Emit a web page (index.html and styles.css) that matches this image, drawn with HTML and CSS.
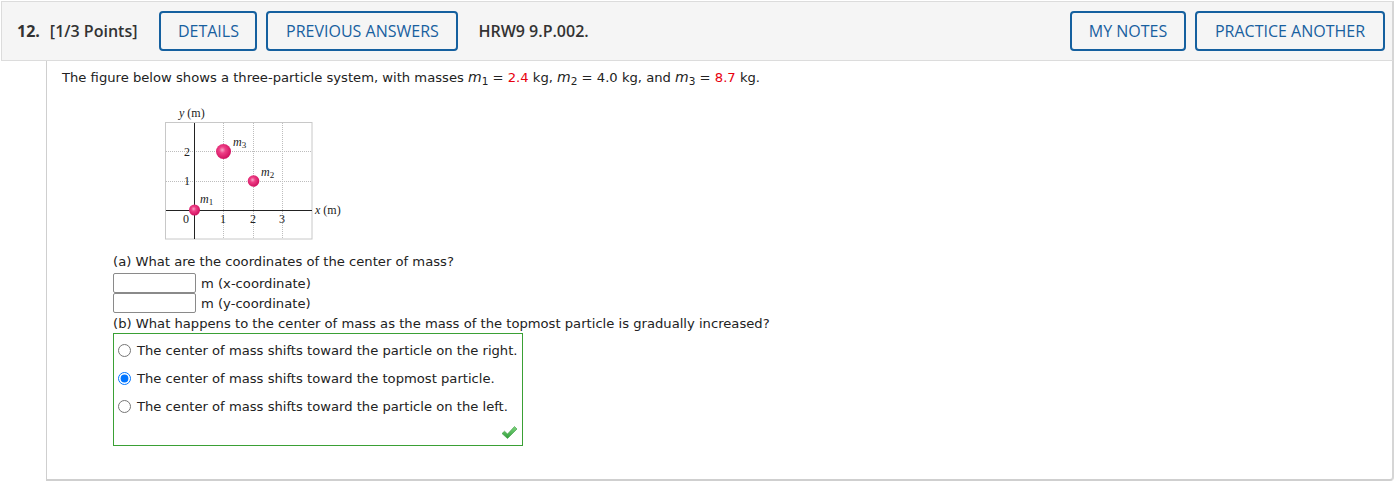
FILE: index.html
```html
<!DOCTYPE html>
<html>
<head>
<meta charset="utf-8">
<link rel="stylesheet" href="styles.css">
</head>
<body>
<div class="page">
  <div class="qhead">
    <div class="qnum">12.</div>
    <div class="qpts">[1/3 Points]</div>
    <button class="btn btn-details">DETAILS</button>
    <button class="btn btn-prev">PREVIOUS ANSWERS</button>
    <div class="qref">HRW9 9.P.002.</div>
    <div class="spacer"></div>
    <button class="btn btn-notes">MY NOTES</button>
    <button class="btn btn-practice">PRACTICE ANOTHER</button>
  </div>
  <div class="qbody">
    <p class="intro">The figure below shows a three-particle system, with masses <i class="m">m</i><sub>1</sub> = <span class="red">2.4</span> kg, <i class="m">m</i><sub>2</sub> = 4.0 kg, and <i class="m">m</i><sub>3</sub> = <span class="red">8.7</span> kg.</p>
    <div class="figure">
      <svg width="190" height="140" viewBox="0 0 190 140">
        <defs>
          <radialGradient id="ball" cx="0.42" cy="0.4" r="0.6">
            <stop offset="0" stop-color="#f7a8c8"/>
            <stop offset="0.35" stop-color="#ee3f86"/>
            <stop offset="1" stop-color="#d0105f"/>
          </radialGradient>
        </defs>
        <g transform="translate(-160,-100)">
          <rect x="165.5" y="121.5" width="146.5" height="116.5" fill="none" stroke="#c8c8c8" stroke-width="1"/>
          <line x1="223.5" y1="122" x2="223.5" y2="238" stroke="#bdbdbd" stroke-dasharray="1,1"/>
          <line x1="253.5" y1="122" x2="253.5" y2="238" stroke="#bdbdbd" stroke-dasharray="1,1"/>
          <line x1="282.5" y1="122" x2="282.5" y2="238" stroke="#bdbdbd" stroke-dasharray="1,1"/>
          <line x1="166" y1="150.5" x2="312" y2="150.5" stroke="#bdbdbd" stroke-dasharray="1,1"/>
          <line x1="166" y1="180.5" x2="312" y2="180.5" stroke="#bdbdbd" stroke-dasharray="1,1"/>
          <line x1="194.5" y1="122" x2="194.5" y2="238" stroke="#222" stroke-width="1"/>
          <line x1="166" y1="209.5" x2="312" y2="209.5" stroke="#222" stroke-width="1"/>
          <g class="figtext">
            <text x="179" y="116"><tspan font-style="italic">y</tspan> (m)</text>
            <text x="315" y="213"><tspan font-style="italic">x</tspan> (m)</text>
            <text x="184" y="155">2</text>
            <text x="184" y="184">1</text>
            <text x="183" y="222">0</text>
            <text x="220" y="222">1</text>
            <text x="250" y="222">2</text>
            <text x="279" y="222">3</text>
            <text x="233" y="145" font-style="italic">m<tspan font-size="9" font-style="normal" dy="2">3</tspan></text>
            <text x="261" y="175" font-style="italic">m<tspan font-size="9" font-style="normal" dy="2">2</tspan></text>
            <text x="200" y="202" font-style="italic">m<tspan font-size="9" font-style="normal" dy="2">1</tspan></text>
          </g>
          <circle cx="223.5" cy="150.5" r="7.5" fill="url(#ball)"/>
          <circle cx="253.5" cy="180" r="5.8" fill="url(#ball)"/>
          <circle cx="194.5" cy="209" r="5.5" fill="url(#ball)"/>
        </g>
      </svg>
    </div>
    <div class="parts">
      <p class="qline">(a) What are the coordinates of the center of mass?</p>
      <div class="answers">
        <div class="ansrow"><input class="ans" type="text"><span>m (x-coordinate)</span></div>
        <div class="ansrow"><input class="ans" type="text"><span>m (y-coordinate)</span></div>
      </div>
      <p class="qline qb">(b) What happens to the center of mass as the mass of the topmost particle is gradually increased?</p>
      <div class="choices">
        <label class="choice"><input type="radio" name="b"><span>The center of mass shifts toward the particle on the right.</span></label>
        <label class="choice"><input type="radio" name="b" checked><span>The center of mass shifts toward the topmost particle.</span></label>
        <label class="choice"><input type="radio" name="b"><span>The center of mass shifts toward the particle on the left.</span></label>
        <div class="checkrow">
          <svg width="17" height="15" viewBox="0 0 17 15">
            <defs>
              <linearGradient id="chk" x1="0" y1="0" x2="0" y2="1">
                <stop offset="0" stop-color="#7fd67f"/>
                <stop offset="1" stop-color="#2f9e3a"/>
              </linearGradient>
            </defs>
            <path d="M1 8.5 L3.5 6.2 L6.5 9 L13.5 1.5 L16 4 L6.5 13.5 Z" fill="url(#chk)" stroke="#3a9a40" stroke-width="0.6" stroke-linejoin="round"/>
          </svg>
        </div>
      </div>
    </div>
  </div>
</div>
</body>
</html>
```

FILE: styles.css
```css
html, body {
  margin: 0;
  padding: 0;
  background: #fff;
}
.page {
  padding: 1px 0 0 1px;
  width: 1393px;
}
.qhead {
  display: flex;
  align-items: center;
  height: 58px;
  background: #f5f5f5;
  border: 1px solid #dcdcdc;
  border-right: 2px solid #d6d6d6;
  padding: 0 7px 0 15px;
  font-family: "Open Sans", "Liberation Sans", sans-serif;
  color: #333;
}
.qnum {
  font-weight: 700;
  font-size: 16px;
  margin-right: 10px;
}
.qpts {
  font-weight: 600;
  font-size: 16px;
  margin-right: 22px;
}
.btn {
  font-family: "Open Sans", "Liberation Sans", sans-serif;
  font-size: 16px;
  color: #18609f;
  background: transparent;
  border: 2px solid #15609f;
  border-radius: 4px;
  height: 40px;
  padding: 0 15px;
  margin-right: 9px;
  letter-spacing: 0;
}
.btn-details { width: 98px; }
.btn-prev { width: 192px; margin-right: 20px; }
.btn-notes { width: 116px; }
.btn-practice { width: 190px; margin-right: 0; }
.qref {
  font-weight: 600;
  font-size: 16px;
}
.spacer { flex: 1; }
.qbody {
  margin-left: 45px;
  border-left: 1px solid #cfcfcf;
  border-right: 2px solid #d6d6d6;
  border-bottom: 2px solid #cfcfcf;
  border-bottom-right-radius: 4px;
  height: 418px;
  padding: 0 0 0 15px;
  font-family: "DejaVu Sans", Verdana, sans-serif;
  font-size: 13.15px;
  color: #222;
}
.intro {
  margin: 0;
  padding-top: 8px;
  line-height: 16px;
}
.m {
  font-style: italic;
  font-size: 14px;
}
sub {
  font-size: 10.5px;
  vertical-align: -3px;
  line-height: 0;
}
.red { color: #e8000e; }
.figure {
  margin: 15px 0 0 98px;
  height: 140px;
}
.figure svg { display: block; }
.figtext text {
  font-family: "Liberation Serif", "DejaVu Serif", serif;
  font-size: 12px;
  fill: #222;
}
.parts {
  margin-left: 51px;
  margin-top: 13px;
}
.qline {
  margin: 0;
  line-height: 16px;
}
.answers {
  margin-top: 3px;
}
.ansrow {
  display: flex;
  align-items: center;
  height: 20px;
}
.ans {
  box-sizing: border-box;
  width: 83px;
  height: 20px;
  margin: 0 5px 0 0;
  border: 1px solid #8a8a8a;
  border-radius: 2px;
  padding: 0;
}
.qb { margin-top: 3px; }
.choices {
  margin-top: 1px;
  width: 408px;
  height: 109px;
  border: 1px solid #3aa035;
  padding: 2px 0 0 0;
}
.choice {
  display: flex;
  align-items: center;
  height: 28px;
}
.choice input {
  margin: 0 6px 0 4px;
  width: 13px;
  height: 13px;
}
.checkrow {
  display: flex;
  justify-content: flex-end;
  padding: 5px 4px 0 0;
}
.checkrow svg { display: block; }
```
